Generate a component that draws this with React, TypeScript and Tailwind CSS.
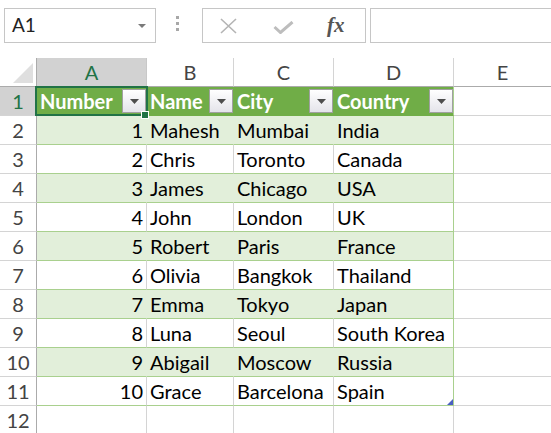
import React from 'react';

type Row = [number, string, string, string];

const rows: Row[] = [
  [1, 'Mahesh', 'Mumbai', 'India'],
  [2, 'Chris', 'Toronto', 'Canada'],
  [3, 'James', 'Chicago', 'USA'],
  [4, 'John', 'London', 'UK'],
  [5, 'Robert', 'Paris', 'France'],
  [6, 'Olivia', 'Bangkok', 'Thailand'],
  [7, 'Emma', 'Tokyo', 'Japan'],
  [8, 'Luna', 'Seoul', 'South Korea'],
  [9, 'Abigail', 'Moscow', 'Russia'],
  [10, 'Grace', 'Barcelona', 'Spain'],
];

const headers = ['Number', 'Name', 'City', 'Country'];

const FilterButton: React.FC = () => (
  <div className="w-[24px] h-[24px] shrink-0 border border-[#a0a0a0] bg-gradient-to-b from-white to-[#e4e4ea] flex items-center justify-center">
    <svg width="9" height="5" viewBox="0 0 9 5">
      <polygon points="0,0 9,0 4.5,5" fill="#4d4d4d" />
    </svg>
  </div>
);

const FormulaBar: React.FC = () => (
  <div className="h-[58px] flex items-start pt-[8px]">
    {/* Name box */}
    <div className="ml-[4px] w-[152px] h-[35px] border border-[#c6c6c6] flex items-center justify-between pl-[7px] pr-[9px] text-[19px] text-[#222]">
      <span>A1</span>
      <svg width="8" height="4" viewBox="0 0 8 4">
        <polygon points="0,0 8,0 4,4" fill="#7a7a7a" />
      </svg>
    </div>

    {/* grip dots */}
    <div className="ml-[20px] mt-[8px] flex flex-col gap-[3px]">
      <div className="w-[3px] h-[3px] bg-[#a8a8a8]" />
      <div className="w-[3px] h-[3px] bg-[#a8a8a8]" />
      <div className="w-[3px] h-[3px] bg-[#a8a8a8]" />
    </div>

    {/* Cancel / enter / function */}
    <div className="ml-[23px] w-[164px] h-[35px] border border-[#c6c6c6] flex items-center">
      <svg className="ml-[17px]" width="17" height="16" viewBox="0 0 17 16">
        <path d="M1 1 L16 15 M16 1 L1 15" stroke="#b4b4b4" strokeWidth="1.6" fill="none" />
      </svg>
      <svg className="ml-[36px] mt-[3px]" width="21" height="13" viewBox="0 0 21 13">
        <path d="M1.5 6 L7.5 11.5 L19.5 1" stroke="#bdbdbd" strokeWidth="3" fill="none" />
      </svg>
      <span className="ml-[33px] [font-family:'Liberation_Serif',serif] italic font-bold text-[21px] text-[#555] leading-none">
        fx
      </span>
    </div>

    {/* Formula input */}
    <div className="ml-[4px] flex-1 h-[35px] border border-r-0 border-[#c6c6c6]" />
  </div>
);

export default function App() {
  return (
    <div className="w-[551px] h-[433px] overflow-hidden bg-white text-black [font-family:Lato,'Liberation_Sans',sans-serif] text-[20px]">
      <FormulaBar />

      <div className="relative">
        <div className="grid grid-cols-[37px_110px_87px_100px_120px_98px] auto-rows-[29px] leading-[29px] w-[552px]">
          {/* column headers */}
          <div className="border-r border-b border-r-[#ababab] border-b-[#ababab] flex items-end justify-end pr-[3px] pb-[3px]">
            <svg width="20" height="20" viewBox="0 0 20 20">
              <polygon points="20,0 20,20 0,20" fill="#dfdfdf" />
            </svg>
          </div>
          <div className="bg-[#d2d2d2] text-[#217346] text-center border-r border-b border-r-[#c8c8c8] border-b-[#ababab]">A</div>
          <div className="text-[#444] text-center border-r border-b border-r-[#d4d4d4] border-b-[#ababab]">B</div>
          <div className="text-[#444] text-center border-r border-b border-r-[#d4d4d4] border-b-[#ababab]">C</div>
          <div className="text-[#444] text-center border-r border-b border-r-[#d4d4d4] border-b-[#ababab]">D</div>
          <div className="text-[#444] text-center border-r border-b border-r-[#d4d4d4] border-b-[#ababab]">E</div>

          {/* row 1: table header */}
          <div className="bg-[#d2d2d2] text-[#217346] text-center border-r border-b border-r-[#ababab] border-b-[#d4d4d4]">1</div>
          {headers.map((h, i) => (
            <div
              key={h}
              className={
                i === 3
                  ? 'bg-[#70ad47] text-white font-bold border-r border-b border-r-[#a9d08e] border-b-[#70ad47] flex items-center justify-between pl-[3px]'
                  : 'bg-[#70ad47] text-white font-bold border-r border-b border-r-[#70ad47] border-b-[#70ad47] flex items-center justify-between pl-[3px]'
              }
            >
              <span>{h}</span>
              <FilterButton />
            </div>
          ))}
          <div className="border-r border-b border-[#d4d4d4]" />

          {/* data rows */}
          {rows.map((r, i) => {
            const band = i % 2 === 0;
            const cell = band
              ? 'bg-[#e2efda] border-r border-b border-r-[#e2efda] border-b-[#a9d08e]'
              : 'bg-white border-r border-b border-r-[#d4d4d4] border-b-[#a9d08e]';
            const last = band
              ? 'bg-[#e2efda] border-r border-b border-r-[#a9d08e] border-b-[#a9d08e] pl-[3px] whitespace-nowrap'
              : 'bg-white border-r border-b border-r-[#a9d08e] border-b-[#a9d08e] pl-[3px] whitespace-nowrap';
            return (
              <React.Fragment key={r[0]}>
                <div className="text-[#444] text-center border-r border-b border-r-[#ababab] border-b-[#d4d4d4]">{i + 2}</div>
                <div className={`${cell} text-right pr-[3px]`}>{r[0]}</div>
                <div className={`${cell} pl-[3px]`}>{r[1]}</div>
                <div className={`${cell} pl-[3px]`}>{r[2]}</div>
                <div className={last}>{r[3]}</div>
                <div className="border-r border-b border-[#d4d4d4]" />
              </React.Fragment>
            );
          })}

          {/* row 12 */}
          <div className="text-[#444] text-center border-r border-b border-r-[#ababab] border-b-[#d4d4d4]">12</div>
          <div className="border-r border-b border-[#d4d4d4]" />
          <div className="border-r border-b border-[#d4d4d4]" />
          <div className="border-r border-b border-[#d4d4d4]" />
          <div className="border-r border-b border-[#d4d4d4]" />
          <div className="border-r border-b border-[#d4d4d4]" />
        </div>

        {/* active cell A1 */}
        <div className="absolute left-[35px] top-[28px] w-[113px] h-[30px] border-2 border-[#217346] pointer-events-none" />
        <div className="absolute left-[142px] top-[54px] w-[6px] h-[6px] bg-[#217346] outline outline-1 outline-white" />

        {/* table resize handle */}
        <svg className="absolute left-[447px] top-[341px]" width="6" height="6" viewBox="0 0 6 6">
          <polygon points="6,0 6,6 0,6" fill="#4a5fc3" />
        </svg>
      </div>
    </div>
  );
}
